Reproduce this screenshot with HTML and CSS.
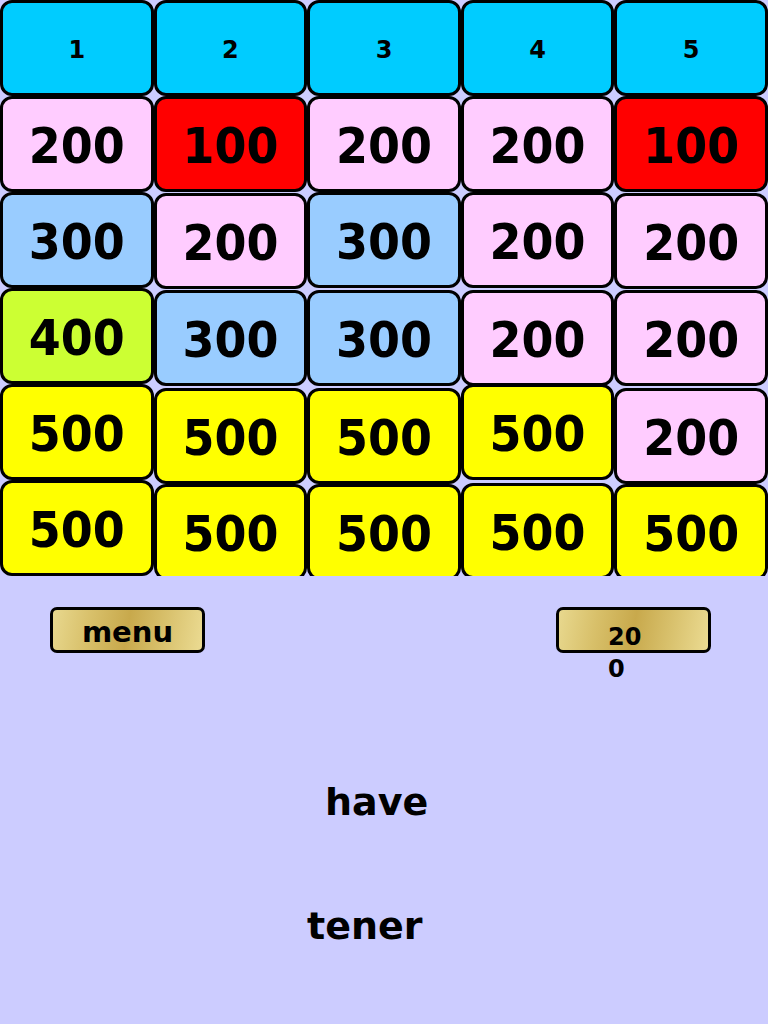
FILE: index.html
```html
<!DOCTYPE html>
<html>
<head>
<meta charset="utf-8">
<link rel="stylesheet" href="styles.css">
</head>
<body>
<div class="board">
  <div class="col">
    <div class="cell head">1</div>
    <div class="cell pink"><span class="val">200</span></div>
    <div class="cell blue"><span class="val">300</span></div>
    <div class="cell lime"><span class="val">400</span></div>
    <div class="cell yellow"><span class="val">500</span></div>
    <div class="cell yellow"><span class="val">500</span></div>
  </div>
  <div class="col">
    <div class="cell head">2</div>
    <div class="cell red"><span class="val">100</span></div>
    <div class="cell pink m1"><span class="val">200</span></div>
    <div class="cell blue m1"><span class="val">300</span></div>
    <div class="cell yellow m2"><span class="val">500</span></div>
    <div class="cell yellow"><span class="val">500</span></div>
  </div>
  <div class="col">
    <div class="cell head">3</div>
    <div class="cell pink"><span class="val">200</span></div>
    <div class="cell blue"><span class="val">300</span></div>
    <div class="cell blue m2"><span class="val">300</span></div>
    <div class="cell yellow m2"><span class="val">500</span></div>
    <div class="cell yellow"><span class="val">500</span></div>
  </div>
  <div class="col">
    <div class="cell head">4</div>
    <div class="cell pink"><span class="val">200</span></div>
    <div class="cell pink"><span class="val">200</span></div>
    <div class="cell pink m2"><span class="val">200</span></div>
    <div class="cell yellow mn2"><span class="val">500</span></div>
    <div class="cell yellow m3"><span class="val">500</span></div>
  </div>
  <div class="col">
    <div class="cell head">5</div>
    <div class="cell red"><span class="val">100</span></div>
    <div class="cell pink m1"><span class="val">200</span></div>
    <div class="cell pink m1"><span class="val">200</span></div>
    <div class="cell pink m2"><span class="val">200</span></div>
    <div class="cell yellow"><span class="val">500</span></div>
  </div>
</div>
<div class="lower">
  <div class="buttons">
    <div class="btn menu">menu</div>
    <div class="btn score"><span class="score-num">200</span></div>
  </div>
  <div class="word have">have</div>
  <div class="word tener">tener</div>
</div>
</body>
</html>
```

FILE: styles.css
```css
html, body {
  margin: 0;
  padding: 0;
  background: #ccccff;
}
body {
  width: 768px;
  height: 1024px;
  overflow: hidden;
  font-family: "DejaVu Sans", "Liberation Sans", sans-serif;
  font-weight: bold;
  color: #000;
}
.board {
  display: flex;
  height: 576px;
  overflow: hidden;
  background: #ccccff;
}
.col {
  flex: 1 1 0;
  display: flex;
  flex-direction: column;
  min-width: 0;
}
.cell {
  box-sizing: border-box;
  height: 96px;
  flex: 0 0 96px;
  border: 3px solid #000;
  border-radius: 12px;
  display: flex;
  align-items: center;
  justify-content: center;
}
.m1 { margin-top: 1px; }
.m2 { margin-top: 2px; }
.m3 { margin-top: 3px; }
.mn2 { margin-top: -2px; }
.head {
  background: #00ccff;
  font-size: 24px;
  padding-top: 3px;
}
.val {
  font-size: 46px;
  display: inline-block;
  transform: scale(1, 1.1);
  padding-top: 2px;
}
.pink { background: #ffccff; }
.red { background: #ff0000; }
.blue { background: #99ccff; }
.lime { background: #ccff33; }
.yellow { background: #ffff00; }

.lower {
  display: flex;
  flex-direction: column;
}
.buttons {
  display: flex;
  justify-content: space-between;
  padding: 31px 57px 0 50px;
}
.btn {
  box-sizing: border-box;
  width: 155px;
  height: 46px;
  border: 3px solid #000;
  border-radius: 7px;
  background: linear-gradient(100deg, #e8d88e 0%, #d8c06a 25%, #c8a94c 50%, #d9c26e 75%, #ebdb92 100%);
}
.menu {
  display: flex;
  align-items: center;
  justify-content: center;
  font-size: 29px;
  padding-top: 3px;
}
.score {
  padding: 11px 0 0 49px;
  overflow: visible;
}
.score-num {
  display: block;
  width: 40px;
  font-size: 24px;
  line-height: 32px;
  word-break: break-all;
  text-align: left;
}
.word {
  font-size: 38px;
  line-height: 44px;
}
.have {
  margin-top: 127px;
  padding-left: 325px;
}
.tener {
  margin-top: 80px;
  padding-left: 307px;
}
```
